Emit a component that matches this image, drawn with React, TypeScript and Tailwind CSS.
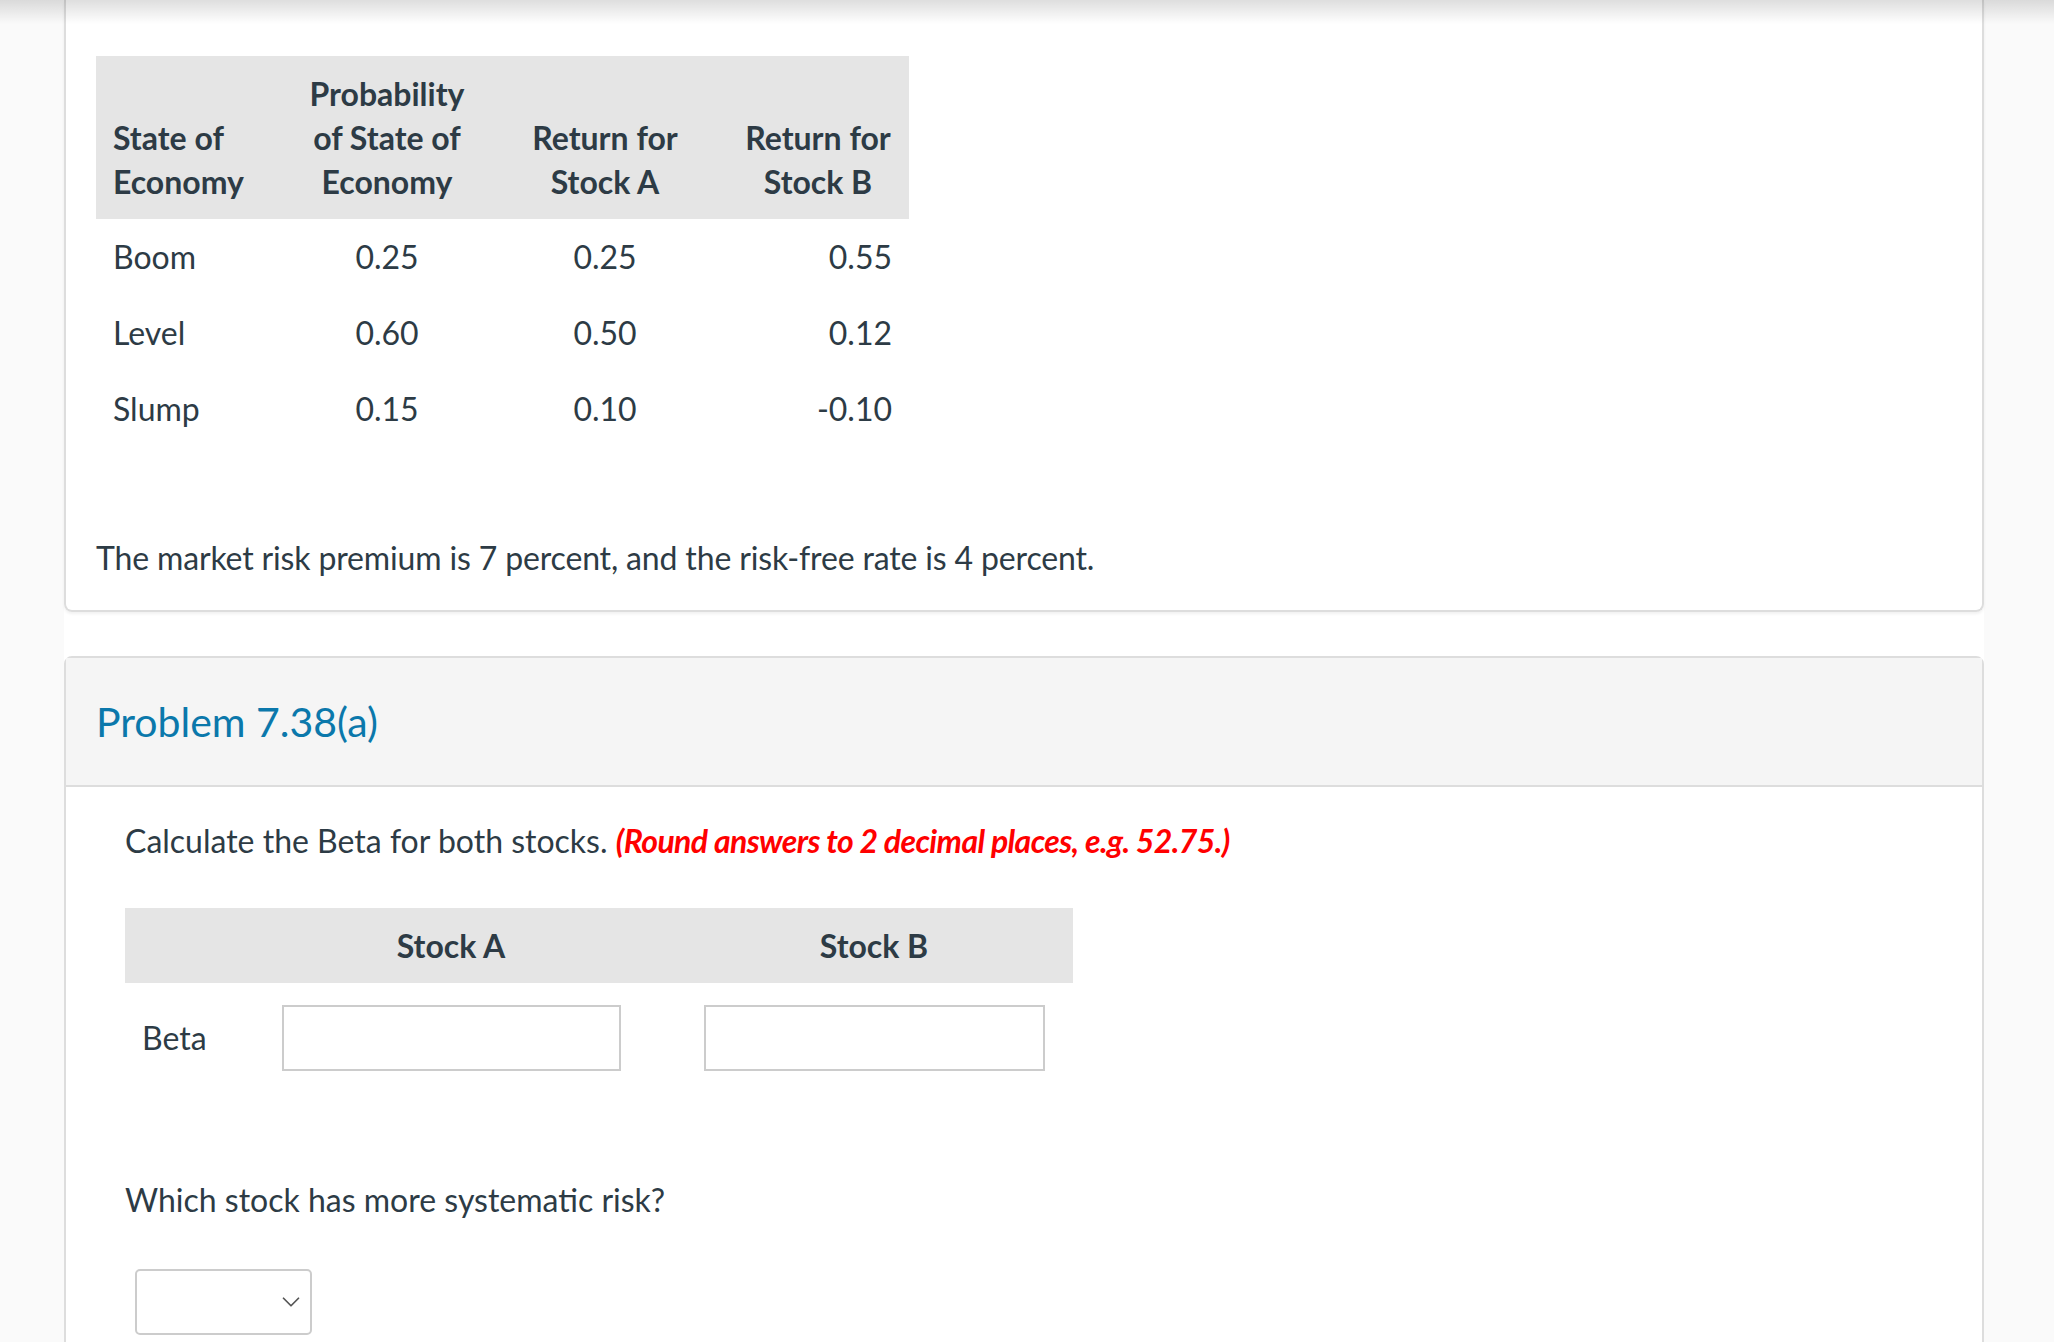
import React from "react";
import { ChevronDown } from "lucide-react";

const rows = [
  { state: "Boom", prob: "0.25", a: "0.25", b: "0.55" },
  { state: "Level", prob: "0.60", a: "0.50", b: "0.12" },
  { state: "Slump", prob: "0.15", a: "0.10", b: "-0.10" },
];

function StateTable() {
  return (
    <div className="w-[813px]">
      <div className="grid grid-cols-[195px_192px_244px_182px] items-end bg-[#e5e5e5] pt-[16px] pb-[15px] font-bold">
        <div className="px-[17px]">
          State of
          <br />
          Economy
        </div>
        <div className="text-center">
          Probability
          <br />
          of State of
          <br />
          Economy
        </div>
        <div className="text-center">
          Return for
          <br />
          Stock A
        </div>
        <div className="text-center">
          Return for
          <br />
          Stock B
        </div>
      </div>
      {rows.map((r) => (
        <div
          key={r.state}
          className="grid h-[76px] grid-cols-[195px_192px_244px_182px] items-center"
        >
          <div className="px-[17px]">{r.state}</div>
          <div className="text-center">{r.prob}</div>
          <div className="text-center">{r.a}</div>
          <div className="px-[17px] text-right">{r.b}</div>
        </div>
      ))}
    </div>
  );
}

function BetaTable() {
  return (
    <div className="w-[948px]">
      <div className="grid h-[75px] grid-cols-[102px_448px_398px] items-center bg-[#e5e5e5] font-bold">
        <div />
        <div className="text-center">Stock A</div>
        <div className="text-center">Stock B</div>
      </div>
      <div className="grid h-[110px] grid-cols-[102px_448px_398px] items-center">
        <div className="px-[17px]">Beta</div>
        <div className="flex justify-center">
          <input className="h-[66px] w-[339px] border-2 border-[#cccccc] bg-white outline-none" />
        </div>
        <div className="flex justify-center">
          <input className="h-[66px] w-[341px] border-2 border-[#cccccc] bg-white outline-none" />
        </div>
      </div>
    </div>
  );
}

export default function App() {
  return (
    <div className="relative min-h-screen overflow-hidden bg-[#fafafa] font-[Lato,'Liberation_Sans',sans-serif] text-[32px] leading-[44px] text-[#2d3b45]">
      <div className="pointer-events-none absolute inset-x-0 top-0 z-10 h-[24px] bg-linear-to-b from-[rgba(0,0,0,0.13)] to-transparent" />
      <div className="ml-[64px] w-[1920px] bg-white pb-[40px]">
        {/* stimulus card, top cut off by the viewport */}
        <div className="rounded-b-[8px] border-x-2 border-b-2 border-[#dddddd] pt-[56px] pb-[30px] pl-[30px] shadow-[0_2px_3px_rgba(0,0,0,0.06)]">
          <StateTable />
          <p className="mt-[89px] tracking-[-0.15px]">
            The market risk premium is 7 percent, and the risk-free rate is 4 percent.
          </p>
        </div>

        <div className="mt-[44px] rounded-t-[8px] border-2 border-[#dddddd]">
          <div className="flex h-[129px] items-center border-b-2 border-[#dddddd] bg-[#f5f5f5] pl-[30px]">
            <h2 className="text-[41px] font-normal text-[#0b78ab]">Problem 7.38(a)</h2>
          </div>
          <div className="pt-[32px] pl-[59px] pb-[40px]">
            <p>
              Calculate the Beta for both stocks.{" "}
              <span className="font-bold italic tracking-[-0.6px] text-[#ff0000]">
                (Round answers to 2 decimal places, e.g. 52.75.)
              </span>
            </p>
            <div className="mt-[45px]">
              <BetaTable />
            </div>
            <p className="mt-[85px]">Which stock has more systematic risk?</p>
            <div className="mt-[47px] ml-[10px]">
              <div className="flex h-[66px] w-[177px] items-center justify-end rounded-[5px] border-2 border-[#cccccc] bg-white pr-[4px]">
                <ChevronDown size={30} strokeWidth={1.4} className="text-[#555555]" />
              </div>
            </div>
          </div>
        </div>
      </div>
    </div>
  );
}
